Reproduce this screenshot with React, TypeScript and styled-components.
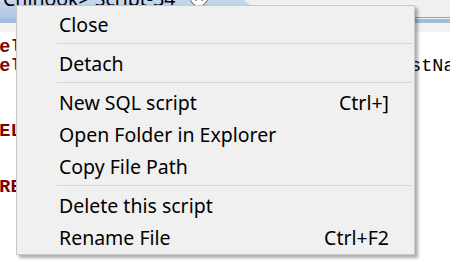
import React from 'react'
import styled, { createGlobalStyle } from 'styled-components'

const GlobalStyle = createGlobalStyle`
  html, body {
    margin: 0;
    padding: 0;
    background: #ffffff;
    overflow: hidden;
  }
`

const Window = styled.div`
  position: relative;
  width: 450px;
  height: 271px;
  overflow: hidden;
  background: #ffffff;
  display: flex;
  flex-direction: column;
`

const TabStrip = styled.div`
  height: 17px;
  flex: none;
  background: #f0f0f0;
  border-bottom: 1px solid #a0a0a0;
  display: flex;
  align-items: flex-end;
`

const Tab = styled.div`
  height: 30px;
  margin-top: -11px;
  margin-left: -4px;
  width: 269px;
  align-self: flex-start;
  flex: none;
  background: linear-gradient(to bottom, #dae5f3 0%, #c3d4eb 45%, #aec4e3 100%);
  clip-path: polygon(0 0, 236px 0, 100% 100%, 0 100%);
  display: flex;
  align-items: flex-start;
  gap: 14px;
  padding-left: 7px;
  box-sizing: border-box;
  font-family: 'Noto Sans', sans-serif;
  font-size: 19.5px;
  line-height: 18px;
  color: #000;
`

const TabLabel = styled.span`
  padding-top: 1px;
  white-space: nowrap;
`

const TabClose = styled.svg`
  flex: none;
  margin-top: -2px;
`

const Gap = styled.div`
  height: 1px;
  flex: none;
  background: #f0f0f0;
`

const BlueBand = styled.div`
  height: 4px;
  flex: none;
  background: #a4bcdd;
`

const ToolStrip = styled.div`
  height: 9px;
  flex: none;
  background: #f3f3f3;
`

const Editor = styled.div`
  flex: 1;
  background: #ffffff;
  padding-top: 6px;
  margin-left: -11.8px;
  display: flex;
  flex-direction: column;
  font-family: 'Liberation Mono', monospace;
  font-size: 18.5px;
  line-height: 19px;
`

const CodeLine = styled.div<{ $space?: number }>`
  height: 19px;
  margin-top: ${(p) => p.$space ?? 0}px;
  white-space: pre;
  color: #000;
`

const Keyword = styled.span`
  color: #7f0000;
  font-weight: bold;
`

const Menu = styled.div`
  position: absolute;
  left: 16px;
  top: 5px;
  width: 399px;
  box-sizing: border-box;
  background: #f0f0f0;
  border: 1px solid #c9c9c9;
  box-shadow: 3px 3px 3px rgba(0, 0, 0, 0.32);
  padding: 3px 1px 0 1px;
  display: flex;
  flex-direction: column;
  font-family: 'Noto Sans', sans-serif;
  font-size: 19.5px;
  color: #000;
`

const Item = styled.div`
  height: 32px;
  display: flex;
  align-items: center;
  justify-content: space-between;
  padding: 0 24px 0 41px;
  line-height: 32px;
  white-space: nowrap;
`

const Shortcut = styled.span`
  color: #000;
`

const Separator = styled.div`
  height: 1px;
  margin: 2px 1px 4px 39px;
  background: #d5d5d5;
`

type Entry = { label: string; shortcut?: string } | 'sep'

const entries: Entry[] = [
  { label: 'Close' },
  'sep',
  { label: 'Detach' },
  'sep',
  { label: 'New SQL script', shortcut: 'Ctrl+]' },
  { label: 'Open Folder in Explorer' },
  { label: 'Copy File Path' },
  'sep',
  { label: 'Delete this script' },
  { label: 'Rename File', shortcut: 'Ctrl+F2' },
]

const App = () => {
  return (
    <Window>
      <GlobalStyle />
      <TabStrip>
        <Tab>
          <TabLabel>Chinook&gt; Script-34</TabLabel>
          <TabClose width="20" height="20" viewBox="0 0 20 20">
            <circle cx="10" cy="10" r="9" fill="#ffffff" stroke="#5a5a5a" strokeWidth="1" />
            <path d="M6.5 6.5 L13.5 13.5 M13.5 6.5 L6.5 13.5" stroke="#333" strokeWidth="1.4" />
          </TabClose>
        </Tab>
      </TabStrip>
      <Gap />
      <BlueBand />
      <ToolStrip />
      <Editor>
        <CodeLine>
          <Keyword>select</Keyword> * from Customer;
        </CodeLine>
        <CodeLine>
          <Keyword>select</Keyword> CustomerId, FirstName, City, LastName
        </CodeLine>
        <CodeLine $space={46}>
          <Keyword>SELECT</Keyword> *
        </CodeLine>
        <CodeLine $space={37}>
          <Keyword>CREATE</Keyword> VIEW
        </CodeLine>
      </Editor>
      <Menu>
        {entries.map((e, i) =>
          e === 'sep' ? (
            <Separator key={i} />
          ) : (
            <Item key={i}>
              <span>{e.label}</span>
              {e.shortcut && <Shortcut>{e.shortcut}</Shortcut>}
            </Item>
          )
        )}
      </Menu>
    </Window>
  )
}

export default App
